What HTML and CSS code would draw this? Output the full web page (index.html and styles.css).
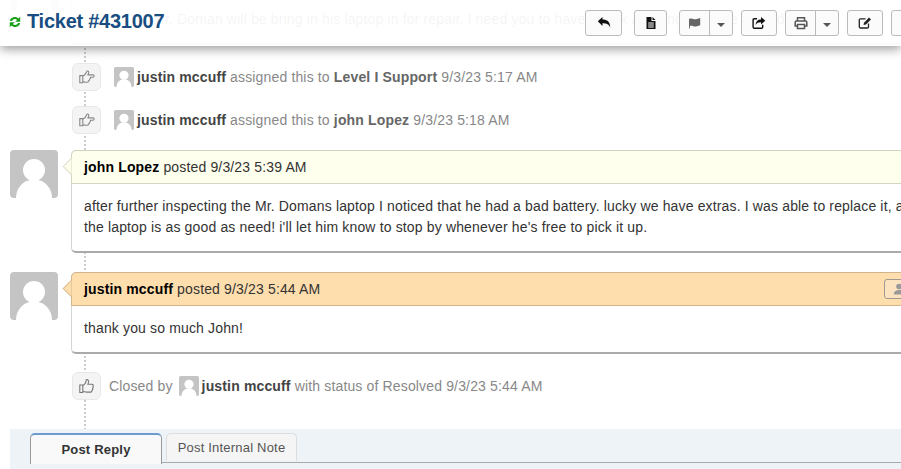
FILE: index.html
```html
<!DOCTYPE html>
<html lang="en">
<head>
<meta charset="utf-8">
<title>Ticket #431007</title>
<link rel="stylesheet" href="styles.css">
</head>
<body>
<svg class="defs" width="0" height="0" aria-hidden="true">
  <defs>
    <symbol id="avatar" viewBox="0 0 48 48">
      <rect width="48" height="48" rx="4" fill="#c4c4c4"/>
      <circle cx="24" cy="20" r="11" fill="#fff"/>
      <path d="M6 48c0-10 7-17 14-18h8c7 1 14 8 14 18z" fill="#fff"/>
    </symbol>
    <symbol id="hand" viewBox="0 0 16 16">
      <path d="M.8 6.600h3v7.200h-3zM3.800 7.200c1.600-.6 3-2 3.700-4.200.4-1.400 2.300-1.200 2.200.4-.1 1-.4 1.800-.7 2.500h5c1.500 0 1.500 2.300 0 2.300h-2.500c.3 1.100-.2 1.800-.9 2 .1 1-.4 1.600-1.100 1.700 0 .8-.5 1.300-1.300 1.300H6.500c-1 0-1.800-.5-2.700-.8" fill="none" stroke="#888" stroke-width="1.100"/>
    </symbol>
    <symbol id="thumb" viewBox="0 0 16 16">
      <path d="M.8 7h3v7.500h-3zM3.800 7.500c1.700-.8 3.200-3 3.500-5.800 1.700-.5 2.700 1 2.100 3l-.5 1.500h4c1.300 0 1.700 1.300 1 2.100.6.700.4 1.700-.3 2.100.4.800.1 1.700-.7 2 .2 1-.4 1.700-1.300 1.700H8c-1.700 0-2.700-.6-4.200-.8" fill="none" stroke="#777" stroke-width="1.100"/>
    </symbol>
  </defs>
</svg>

<header class="ticket-bar">
  <div class="title-wrap">
    <svg class="refresh" viewBox="0 0 12 12" width="12" height="12" aria-hidden="true">
      <path d="M.8 5C1.400 2.300 3.500.9 6 .9c1.500 0 2.700.6 3.600 1.500L11.200.8v5H6.200l1.900-1.900C7.600 3.300 6.900 3 6 3 4.600 3 3.500 3.800 3 5zM11.200 7c-.6 2.700-2.700 4.100-5.200 4.100-1.500 0-2.700-.6-3.600-1.500L.8 11.200v-5h5L3.900 8.100C4.400 8.700 5.100 9 6 9c1.400 0 2.500-.8 3-2z" fill="#14a014"/>
    </svg>
    <h1 class="title">Ticket #431007</h1>
  </div>
  <div class="toolbar">
    <button class="btn btn-reply" type="button">
      <svg viewBox="0 0 14 14" width="14" height="14" aria-hidden="true"><path d="M.8 5.300 5.500 1v2.600c4.700 0 7.700 2.300 7.700 8-1.200-3.300-3.400-4.300-7.700-4.300v2.700z" fill="#111"/></svg>
    </button>
    <button class="btn btn-doc" type="button">
      <svg viewBox="0 0 12 14" width="12" height="14" aria-hidden="true"><path d="M1.500 1h5v4h4v8h-9zM7.500 1l3 3h-3z" fill="#111"/><path d="M3.200 7h5.600M3.200 9h5.600M3.200 11h5.600" stroke="#fff" stroke-width="1"/></svg>
    </button>
    <div class="split split-flag">
      <button class="btn-main flag-main" type="button">
        <svg viewBox="0 0 14 14" width="14" height="14" aria-hidden="true"><path d="M1 2.800h1c2.300-1 3.700 1 6 .4 1.300-.3 2.500-.7 4.200-1.200v7.200c-1.700.5-2.900.9-4.200 1.200-2.300.5-3.700-1.400-6-.4H1.900v2.500H1z" fill="#666"/></svg>
      </button>
      <button class="btn-caret" type="button"><span class="caret"></span></button>
    </div>
    <button class="btn btn-share" type="button">
      <svg viewBox="0 0 14 14" width="14" height="14" aria-hidden="true"><path d="M9 1l4.300 3.700L9 8.400V6.200c-2.800 0-4.300.7-5.300 2.800 0-3.500 2-5.500 5.300-5.500z" fill="#111"/><path d="M5 2.700H2.300c-.7 0-1.200.5-1.200 1.200v7.200c0 .7.500 1.200 1.200 1.200h7.200c.7 0 1.200-.5 1.200-1.200V8.700" fill="none" stroke="#111" stroke-width="1.400"/></svg>
    </button>
    <div class="split split-print">
      <button class="btn-main print-main" type="button">
        <svg viewBox="0 0 14 14" width="14" height="14" aria-hidden="true"><path d="M3.500 5V1.700h7V5M3.500 10H1.200V6.300c0-.7.500-1.200 1.200-1.200h9.200c.7 0 1.200.5 1.200 1.200V10h-2.300M3.500 8.500h7v4h-7z" fill="none" stroke="#555" stroke-width="1.500"/></svg>
      </button>
      <button class="btn-caret" type="button"><span class="caret"></span></button>
    </div>
    <button class="btn btn-edit" type="button">
      <svg viewBox="0 0 14 14" width="14" height="14" aria-hidden="true"><path d="M10.500 7.500v3.300c0 .7-.5 1.200-1.200 1.200H2.500c-.7 0-1.200-.5-1.200-1.200V4c0-.7.500-1.200 1.200-1.200h5" fill="none" stroke="#222" stroke-width="1.300"/><path d="M5.500 9l.5-2.200L11 1.500l2 1.900-5 5.200z" fill="#222"/></svg>
    </button>
    <button class="btn btn-more" type="button"></button>
  </div>
</header>

<main class="thread">
  <article class="entry entry-first">
    <svg class="avatar-lg"><use href="#avatar"/></svg>
    <div class="card">
      <div class="card-head head-note"><span class="hidden-head"></span></div>
      <div class="card-body body-first">Mr. Doman will be bring in his laptop in for repair. I need you to have a look at it and help me posted!</div>
    </div>
  </article>

  <div class="event event-a">
    <span class="event-icon"><svg width="16" height="16"><use href="#hand"/></svg></span>
    <svg class="avatar-sm"><use href="#avatar"/></svg>
    <span class="event-text"><b class="who">justin mccuff</b> assigned this to <b>Level I Support</b> 9/3/23 5:17 AM</span>
  </div>
  <div class="event event-b">
    <span class="event-icon"><svg width="16" height="16"><use href="#hand"/></svg></span>
    <svg class="avatar-sm"><use href="#avatar"/></svg>
    <span class="event-text"><b class="who">justin mccuff</b> assigned this to <b>john Lopez</b> 9/3/23 5:18 AM</span>
  </div>

  <article class="entry entry-john">
    <svg class="avatar-lg"><use href="#avatar"/></svg>
    <div class="card">
      <div class="card-head head-message"><span><b>john Lopez</b> posted 9/3/23 5:39 AM</span></div>
      <div class="card-body">after further inspecting the Mr. Domans laptop I noticed that he had a bad battery. lucky we have extras. I was able to replace it, and<br>the laptop is as good as need! i'll let him know to stop by whenever he's free to pick it up.</div>
    </div>
  </article>

  <article class="entry entry-justin">
    <svg class="avatar-lg"><use href="#avatar"/></svg>
    <div class="card">
      <div class="card-head head-response">
        <span><b>justin mccuff</b> posted 9/3/23 5:44 AM</span>
        <span class="staff-badge">
          <svg viewBox="0 0 12 12" width="12" height="12" aria-hidden="true"><circle cx="6" cy="3.500" r="2.800" fill="#999"/><path d="M.8 11.500c0-3 2-4.500 5.200-4.500s5.200 1.500 5.200 4.500z" fill="#999"/></svg>
        </span>
      </div>
      <div class="card-body">thank you so much John!</div>
    </div>
  </article>

  <div class="event event-c">
    <span class="event-icon"><svg width="16" height="16"><use href="#thumb"/></svg></span>
    <span class="event-text closed-by">Closed by</span>
    <svg class="avatar-sm"><use href="#avatar"/></svg>
    <span class="event-text"><b class="who">justin mccuff</b> with status of Resolved 9/3/23 5:44 AM</span>
  </div>
</main>

<section class="reply">
  <nav class="tabs">
    <a class="tab tab-active">Post Reply</a>
    <a class="tab">Post Internal Note</a>
  </nav>
</section>
</body>
</html>
```

FILE: styles.css
```css
* {
  box-sizing: border-box;
}

html,
body {
  height: 469px;
}

body {
  position: relative;
  margin: 0;
  overflow: hidden;
  background: #fff;
  color: #333;
  font-family: "Liberation Sans", Arial, sans-serif;
  font-size: 14px;
  line-height: 21px;
  letter-spacing: 0.15px;
}

.defs {
  position: absolute;
}

.ticket-bar {
  position: absolute;
  top: 0;
  left: 0;
  right: 0;
  z-index: 5;
  display: flex;
  align-items: center;
  height: 46px;
  background: rgba(255, 255, 255, 0.95);
  box-shadow: 0 3px 10px rgba(0, 0, 0, 0.4);
}

.title-wrap {
  display: flex;
  flex: 0 0 585px;
  align-items: center;
  gap: 6px;
  padding: 0 0 5px 9px;
}

.refresh {
  margin-top: 3px;
}

.title {
  margin: 0;
  color: #184e81;
  font-size: 20px;
  font-weight: 700;
  line-height: 24px;
  letter-spacing: -0.25px;
}

.toolbar {
  display: flex;
  flex: none;
  gap: 8px;
  align-items: center;
  height: 26px;
}

.btn,
.split {
  display: flex;
  flex: none;
  align-items: center;
  justify-content: center;
  height: 26px;
  padding: 0;
  background: rgba(250, 250, 250, 0.85);
  border: 1px solid #bbb;
  border-radius: 3px;
}

.btn-reply {
  width: 37px;
  margin-right: 4px;
}

.btn-doc {
  width: 33px;
  margin-right: 4px;
}

.btn-share,
.btn-edit,
.btn-more {
  width: 36px;
}

.split {
  width: 54px;
}

.btn-main,
.btn-caret {
  display: flex;
  align-items: center;
  justify-content: center;
  height: 100%;
  padding: 0;
  background: none;
  border: 0;
}

.btn-main {
  width: 30px;
  border-right: 1px solid #bbb;
}

.btn-caret {
  flex: 1;
}

.caret {
  width: 0;
  height: 0;
  margin-top: 3px;
  border-top: 4px solid #555;
  border-right: 4px solid transparent;
  border-left: 4px solid transparent;
}

/* Thread */
.thread {
  display: flex;
  flex-direction: column;
  height: 429px;
  padding-left: 10px;
  background-image: linear-gradient(#ccc 50%, transparent 50%);
  background-repeat: repeat-y;
  background-position: 84px 0;
  background-size: 2px 4px;
}

.entry {
  display: flex;
  flex: none;
  align-items: flex-start;
}

.entry-first {
  margin-top: -37px;
}

.entry-john {
  margin-top: 16px;
}

.entry-justin {
  margin-top: 19px;
}

.avatar-lg {
  flex: none;
  width: 48px;
  height: 48px;
  margin-right: 13px;
}

.card {
  position: relative;
  flex: none;
  width: 900px;
  background: #fff;
  border: 1px solid #d5d5d5;
  border-bottom: 2px solid #aaa;
  border-radius: 5px;
}

.card-head {
  position: relative;
  display: flex;
  align-items: center;
  justify-content: space-between;
  height: 34px;
  margin: -1px -1px 0;
  padding: 0 46px 0 12px;
  border: 1px solid #d5d5c5;
  border-radius: 5px 5px 0 0;
  color: #333;
}

.card-head b {
  color: #000;
}

/* Little arrow joining card head and avatar */
.card-head::before {
  content: "";
  position: absolute;
  top: 9px;
  left: -7px;
  width: 12px;
  height: 12px;
  background: inherit;
  border-bottom: 1px solid;
  border-left: 1px solid;
  border-color: inherit;
  transform: rotate(45deg);
  clip-path: polygon(0 0, 0 100%, 100% 100%);
}

.head-note,
.head-message {
  background: #ffffee;
  border-color: #d4d4c0;
}

.head-response {
  background: #ffdead;
  border-color: #d0b48c;
}

.card-body {
  padding: 12px 12px 13px;
}

.body-first {
  padding-left: 81px;
}

.staff-badge {
  display: flex;
  align-items: center;
  width: 40px;
  height: 20px;
  padding-left: 8px;
  background: #fce3bf;
  border: 1px solid #a09a90;
  border-radius: 3px;
}

/* Timeline events */
.event {
  display: flex;
  flex: none;
  align-items: center;
  height: 28px;
  margin-left: 62px;
  color: #888;
}

.event-a {
  margin-top: 18px;
}

.event-b {
  margin-top: 15px;
}

.event-c {
  margin-top: 18px;
}

.event-icon {
  display: flex;
  flex: none;
  align-items: center;
  justify-content: center;
  width: 29px;
  height: 28px;
  margin-right: 13px;
  background: #f4f4f4;
  border: 1px solid #e8e8e8;
  border-radius: 6px;
}

.avatar-sm {
  flex: none;
  width: 20px;
  height: 20px;
  margin-right: 3px;
}

.event-text b {
  color: #666;
}

.event-text b.who {
  color: #444;
}

.closed-by {
  margin: 0 6px 0 -5px;
}

/* Reply tabs */
.reply {
  height: 40px;
  margin-left: 10px;
  padding: 4px 0 0 20px;
  background: #eef3f8;
  overflow: hidden;
}

.tabs {
  display: flex;
  gap: 4px;
  align-items: flex-start;
  height: 30px;
  border-bottom: 1px solid #aaa;
}

.tab {
  flex: none;
  width: 131px;
  height: 28px;
  padding: 0;
  background: #f5f5f5;
  border: 1px solid #ddd;
  border-bottom: 0;
  border-radius: 5px 5px 0 0;
  color: #555;
  font-size: 13px;
  line-height: 27px;
  letter-spacing: 0.2px;
  text-align: center;
}

.tab-active {
  position: relative;
  z-index: 1;
  width: 132px;
  height: 31px;
  background: #f9f9f9;
  border-color: #999;
  border-top: 2px solid #6e9ccf;
  color: #333;
  font-weight: 700;
  line-height: 30px;
}
```
